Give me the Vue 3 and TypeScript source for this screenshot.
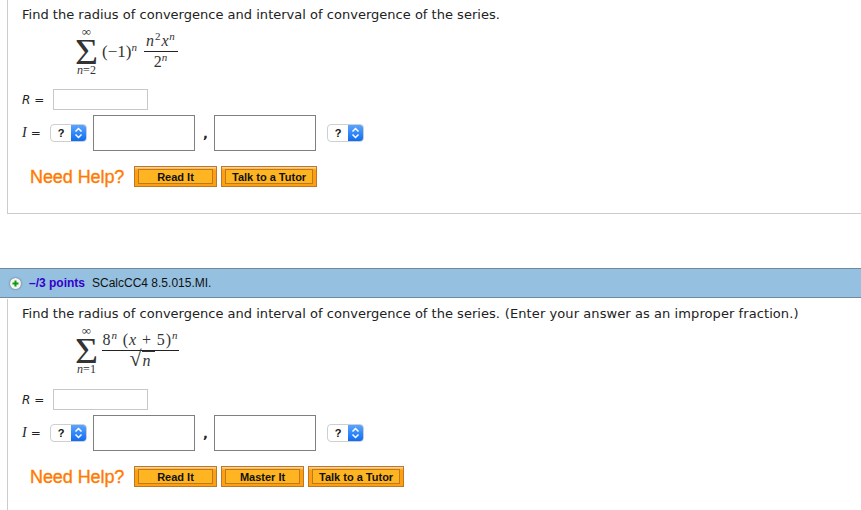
<script setup lang="ts">
interface Question {
  id: number
  header: boolean
  formula: 'first' | 'second'
  prompt: string
  note?: string
  buttons: string[]
}

const questions: Question[] = [
  {
    id: 1,
    header: false,
    formula: 'first',
    prompt: 'Find the radius of convergence and interval of convergence of the series.',
    buttons: ['Read It', 'Talk to a Tutor'],
  },
  {
    id: 2,
    header: true,
    formula: 'second',
    prompt: 'Find the radius of convergence and interval of convergence of the series.',
    note: '(Enter your answer as an improper fraction.)',
    buttons: ['Read It', 'Master It', 'Talk to a Tutor'],
  },
]
</script>

<template>
  <div class="page">
    <section v-for="q in questions" :key="q.id" class="question" :class="{ 'has-header': q.header }">
      <header v-if="q.header" class="q-header">
        <span class="plus">
          <svg width="7" height="7" viewBox="0 0 7 7">
            <path d="M3.5 0.5v6M0.5 3.5h6" stroke="#0f9a0f" stroke-width="2" fill="none" />
          </svg>
        </span>
        <span class="points">–/3 points</span>
        <span class="code">SCalcCC4 8.5.015.MI.</span>
      </header>

      <div class="q-body">
        <p class="prompt">{{ q.prompt }}<span v-if="q.note" class="note">{{ q.note }}</span></p>

        <div class="formula">
          <div class="sum">
            <span class="sum-top">∞</span>
            <span class="sigma">Σ</span>
            <span class="sum-low"><i>n</i>={{ q.formula === 'first' ? '2' : '1' }}</span>
          </div>

          <template v-if="q.formula === 'first'">
            <span class="factor">(−1)<sup><i>n</i></sup></span>
            <div class="frac first-frac">
              <span class="num"><i>n</i><sup>2</sup><i>x</i><sup><i>n</i></sup></span>
              <span class="den">2<sup><i>n</i></sup></span>
            </div>
          </template>

          <div v-else class="frac second-frac">
            <span class="num">8<sup><i>n</i></sup> (<i>x</i> + 5)<sup><i>n</i></sup></span>
            <span class="den root-den"><span class="root">√</span><span class="radicand"><i>n</i></span></span>
          </div>
        </div>

        <div class="r-row">
          <label class="var-label">R =</label>
          <input class="r-input" type="text" />
        </div>

        <div class="i-row">
          <span class="i-label"><i>I</i><span class="i-equals">=</span></span>
          <span class="select">
            <span class="select-value">?</span>
            <span class="select-arrows">
              <svg width="9" height="12" viewBox="0 0 9 12">
                <path d="M1.5 4.5 4.5 1.5l3 3M1.5 7.5l3 3 3-3" stroke="#fff" stroke-width="1.5" fill="none" />
              </svg>
            </span>
          </span>
          <input class="i-input" type="text" />
          <span class="comma">,</span>
          <input class="i-input" type="text" />
          <span class="select second-select">
            <span class="select-value">?</span>
            <span class="select-arrows">
              <svg width="9" height="12" viewBox="0 0 9 12">
                <path d="M1.5 4.5 4.5 1.5l3 3M1.5 7.5l3 3 3-3" stroke="#fff" stroke-width="1.5" fill="none" />
              </svg>
            </span>
          </span>
        </div>

        <div class="help">
          <span class="help-title">Need Help?</span>
          <button v-for="b in q.buttons" :key="b" class="help-btn" type="button">
            <span class="help-btn-inner">{{ b }}</span>
          </button>
        </div>
      </div>
    </section>
  </div>
</template>

<style>
html,
body {
  margin: 0;
  background: #fff;
  overflow: hidden;
}
</style>

<style scoped>
.page {
  width: 861px;
  height: 510px;
  overflow: hidden;
  background: #fff;
  font-family: "DejaVu Sans", sans-serif;
  color: #222;
}

.question.has-header {
  margin-top: 54px;
}

.q-header {
  height: 28px;
  display: flex;
  align-items: center;
  background: #95c0e0;
  border-top: 1px solid #6f8b9e;
  border-bottom: 1px solid #6f8b9e;
  padding-left: 10px;
  font-family: "Liberation Sans", sans-serif;
  font-size: 12px;
}

.plus {
  width: 11px;
  height: 11px;
  border-radius: 50%;
  background: #f4f4f4;
  box-shadow: 0 0 2px #555;
  display: flex;
  align-items: center;
  justify-content: center;
  margin-right: 8px;
}

.points {
  color: #3300cc;
  font-weight: 700;
  margin-right: 7px;
}

.code {
  color: #111;
}

.q-body {
  margin-left: 7px;
  border-left: 1px solid #ccc;
  border-bottom: 1px solid #ccc;
  padding: 0 0 26px 14px;
}

.has-header .q-body {
  margin-top: 1px;
}

.prompt {
  margin: 0;
  padding-top: 7px;
  font-size: 13px;
  line-height: 16px;
  letter-spacing: 0.015px;
  white-space: nowrap;
}

.note {
  margin-left: 5px;
  letter-spacing: 0.08px;
}

.formula {
  margin: 5px 0 0 53px;
  height: 52px;
  display: flex;
  align-items: center;
  font-family: "Liberation Serif", serif;
  color: #333;
}

.sum {
  width: 23px;
  height: 52px;
  position: relative;
  flex: none;
}

.sum-top,
.sum-low {
  position: absolute;
  left: 0;
  width: 100%;
  text-align: center;
  font-size: 12px;
  line-height: 11px;
}

.sum-top {
  top: -2px;
  font-size: 13px;
}

.sum-low {
  bottom: 4px;
}

.sigma {
  position: absolute;
  top: 14px;
  left: 0;
  width: 100%;
  text-align: center;
  font-size: 36px;
  line-height: 20px;
  transform: scaleX(1.1);
}

.factor {
  margin: 0 6px 0 4px;
  font-size: 17px;
  position: relative;
  top: -2px;
}

sup {
  font-size: 11px;
  line-height: 0;
  vertical-align: 6px;
  letter-spacing: 1px;
}

.frac {
  display: flex;
  flex-direction: column;
  align-items: center;
  font-size: 16px;
  position: relative;
  top: -3px;
}

.first-frac {
  width: 34px;
}

.first-frac .num {
  letter-spacing: 0.8px;
}

.second-frac {
  width: 77px;
  margin-left: 4px;
}

.second-frac .num {
  letter-spacing: 0.9px;
}

.num {
  display: block;
  width: 100%;
  text-align: center;
  line-height: 20px;
  border-bottom: 1px solid #222;
  white-space: nowrap;
}

.den {
  line-height: 19px;
  white-space: nowrap;
}

.root-den {
  margin-left: 3px;
}

.root {
  font-size: 22px;
  line-height: 0;
}

.radicand {
  border-top: 1px solid #333;
  padding: 0 3px 0 1px;
  letter-spacing: 1px;
}

.r-row {
  margin-top: 9px;
  display: flex;
  align-items: center;
  height: 21px;
}

.has-header .r-row {
  margin-top: 10px;
}

.var-label {
  width: 31px;
  font-size: 12px;
  font-style: italic;
}

.r-input {
  box-sizing: border-box;
  width: 95px;
  height: 21px;
  padding: 0;
  margin: 0;
  border: 1px solid #c8c8c8;
  background: #fff;
}

.i-row {
  margin-top: 5px;
  display: flex;
  align-items: center;
  height: 36px;
}

.i-label {
  width: 28px;
  font-family: "Liberation Serif", serif;
  font-size: 14px;
  color: #222;
  white-space: nowrap;
}

.i-equals {
  font-family: "DejaVu Sans", sans-serif;
  font-size: 12px;
  margin-left: 4px;
}

.select {
  box-sizing: border-box;
  flex: none;
  width: 37px;
  height: 18px;
  display: flex;
  border: 1px solid #cfcfcf;
  border-radius: 4px;
  background: #fff;
  margin-right: 6px;
  overflow: hidden;
  font-family: "Liberation Sans", sans-serif;
  font-size: 11px;
  font-weight: 700;
}

.second-select {
  margin-left: 11px;
  margin-right: 0;
}

.select-value {
  flex: 1;
  text-align: center;
  line-height: 16px;
  color: #111;
}

.select-arrows {
  width: 15px;
  display: flex;
  align-items: center;
  justify-content: center;
  background: linear-gradient(#5aa5ff, #0f6cf2);
}

.i-input {
  box-sizing: border-box;
  width: 102px;
  height: 36px;
  padding: 0;
  margin: 0;
  border: 1px solid #808080;
  background: #fff;
}

.comma {
  width: 19px;
  text-align: center;
  font-size: 13px;
  font-weight: 700;
  position: relative;
  left: 1px;
}

.help {
  margin: 15px 0 0 8px;
  display: flex;
  align-items: center;
  height: 21px;
}

.help-title {
  width: 104px;
  padding-top: 1px;
  font-family: "Liberation Sans", sans-serif;
  font-size: 18px;
  letter-spacing: -0.08px;
  color: #ff7a00;
  -webkit-text-stroke: 0.35px #ff7a00;
  white-space: nowrap;
}

.help-btn {
  box-sizing: border-box;
  height: 21px;
  margin: 0 4px 0 0;
  padding: 2px 3px;
  display: flex;
  border: 1px solid #b87a2a;
  background: linear-gradient(#ffd9a8 0, #ff9f0f 3px, #ff9f0f 100%);
  cursor: pointer;
  font-family: "Liberation Sans", sans-serif;
  font-size: 11px;
  font-weight: 700;
  color: #111;
}

.help-btn-inner {
  box-sizing: border-box;
  height: 15px;
  line-height: 14px;
  min-width: 75px;
  padding: 0 6px;
  border: 1px solid #bb7a22;
  background: #ffb522;
  text-align: center;
  white-space: nowrap;
}
</style>
